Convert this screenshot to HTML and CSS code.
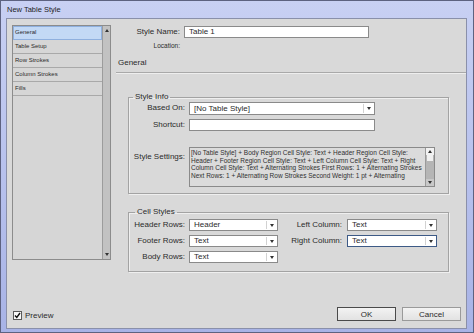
FILE: index.html
```html
<!DOCTYPE html>
<html lang="en">
    <head>
        <title>New Table Style</title>
        <meta charset="UTF-8">
        <meta name="viewport" content="width=device-width, initial-scale=1">
        <link rel="stylesheet" href="styles.css">
    </head>

    <body>
        <div class="window">
            <div class="titlebar">New Table Style</div>

            <div class="dialog">
                <div class="main">
                    <!-- left category list -->
                    <div class="sidebar">
                        <ul class="list">
                            <li class="selected">General</li>
                            <li>Table Setup</li>
                            <li>Row Strokes</li>
                            <li>Column Strokes</li>
                            <li>Fills</li>
                        </ul>
                        <div class="scrollbar">
                            <span class="arrow-up"></span>
                            <span class="arrow-down"></span>
                        </div>
                    </div>

                    <div class="content">
                        <div class="name-row">
                            <label>Style Name:</label>
                            <input class="field" type="text" value="Table 1">
                        </div>
                        <div class="location-row">
                            <span>Location:</span>
                        </div>
                        <div class="section-title">General</div>
                        <div class="rule"></div>

                        <fieldset class="group info-group">
                            <legend>Style Info</legend>
                            <div class="info-grid">
                                <label>Based On:</label>
                                <div class="select wide">
                                    <span class="value">[No Table Style]</span>
                                    <span class="drop"><i></i></span>
                                </div>
                                <label>Shortcut:</label>
                                <input class="field wide" type="text" value="">
                                <label class="top">Style Settings:</label>
                                <div class="settings">
                                    <div class="settings-text">
                                        [No Table Style] + Body Region Cell Style: Text + Header Region Cell Style:<br>
                                        Header + Footer Region Cell Style: Text + Left Column Cell Style: Text + Right<br>
                                        Column Cell Style: Text + Alternating Strokes First Rows: 1 + Alternating Strokes<br>
                                        Next Rows: 1 + Alternating Row Strokes Second Weight: 1 pt + Alternating
                                    </div>
                                    <div class="mini-scroll">
                                        <span class="btn-up"><i></i></span>
                                        <span class="thumb"></span>
                                        <span class="btn-down"><i></i></span>
                                    </div>
                                </div>
                            </div>
                        </fieldset>

                        <fieldset class="group cell-group">
                            <legend>Cell Styles</legend>
                            <div class="cell-grid">
                                <label>Header Rows:</label>
                                <div class="select"><span class="value">Header</span><span class="drop"><i></i></span></div>
                                <label>Left Column:</label>
                                <div class="select"><span class="value">Text</span><span class="drop"><i></i></span></div>

                                <label>Footer Rows:</label>
                                <div class="select"><span class="value">Text</span><span class="drop"><i></i></span></div>
                                <label>Right Column:</label>
                                <div class="select focused"><span class="value">Text</span><span class="drop"><i></i></span></div>

                                <label>Body Rows:</label>
                                <div class="select"><span class="value">Text</span><span class="drop"><i></i></span></div>
                            </div>
                        </fieldset>
                    </div>
                </div>

                <div class="footer">
                    <span class="checkbox">
                        <svg width="7" height="7" viewBox="0 0 7 7"><path d="M1 3.5 L2.8 5.5 L6 1" fill="none" stroke="#111" stroke-width="1.4"/></svg>
                    </span>
                    <span class="check-label">Preview</span>
                    <button class="button default">OK</button>
                    <button class="button">Cancel</button>
                </div>
            </div>
        </div>
    </body>
</html>
```

FILE: styles.css
```css
* {
    box-sizing: border-box;
}
body {
    margin: 0;
    font-family: "Liberation Sans", Arial, sans-serif;
    font-size: 8px;
    color: #2b2b2b;
    background-color: #a9b4e6;
}
.window {
    width: 474px;
    height: 333px;
    display: flex;
    flex-direction: column;
    background: linear-gradient(180deg, #c8d0f3, #b5bfec 60%, #a8b3e6);
    border: 1px solid #5d6280;
}
.titlebar {
    height: 17px;
    padding-left: 6px;
    font-size: 7.5px;
    line-height: 17px;
    color: #1e1e1e;
}
.dialog {
    flex: 1;
    margin: 0 6px 3px 5px;
    padding: 6px 5px 7px 5px;
    background-color: #d9d9d9;
    border: 1px solid #8a90aa;
    display: flex;
    flex-direction: column;
}
.main {
    flex: 1;
    display: flex;
    gap: 5px;
}

/* sidebar list */
.sidebar {
    width: 99px;
    height: 235px;
    display: flex;
    background-color: #d6d6d6;
    border: 1px solid #8c8c8c;
}
.list {
    flex: 1;
    list-style: none;
    margin: 0;
    padding: 0;
}
.list li {
    height: 14px;
    padding-left: 2px;
    font-size: 6px;
    line-height: 13px;
    border-bottom: 1px solid #a9a9a9;
}
.list li.selected {
    background-color: #c3d9f5;
    border: 1px solid #8fb0de;
    line-height: 11px;
    padding-left: 1px;
}
.scrollbar {
    width: 8px;
    background-color: #c2c2c2;
    border-left: 1px solid #9c9c9c;
    display: flex;
    flex-direction: column;
    justify-content: space-between;
    align-items: center;
    padding: 3px 0;
}
.arrow-up,
.btn-up i {
    width: 0;
    height: 0;
    border-left: 2px solid transparent;
    border-right: 2px solid transparent;
    border-bottom: 3px solid #333;
}
.arrow-down,
.btn-down i,
.drop i {
    width: 0;
    height: 0;
    border-left: 2px solid transparent;
    border-right: 2px solid transparent;
    border-top: 3px solid #333;
}

/* right side */
.content {
    flex: 1;
    margin-right: -5px;
}
label {
    text-align: right;
    white-space: nowrap;
}
.name-row {
    display: grid;
    grid-template-columns: 64px 185px;
    column-gap: 4px;
    margin-top: 1px;
    line-height: 12px;
}
.field {
    height: 12px;
    padding: 0 4px;
    font: inherit;
    font-size: 8px;
    color: #2b2b2b;
    background-color: #fff;
    border: 1px solid #8a8a8a;
    outline: none;
}
.location-row {
    width: 64px;
    margin-top: 4px;
    text-align: right;
    font-size: 6.5px;
    line-height: 8px;
}
.section-title {
    margin-top: 8px;
    padding-left: 2px;
    line-height: 10px;
}
.rule {
    margin-top: 4px;
    border-top: 1px solid #a9a9a9;
    border-bottom: 1px solid #eeeeee;
}
.group {
    width: 321px;
    margin: 0 0 0 12px;
    padding: 0;
    border: 1px solid #a3a3a3;
    box-shadow: inset 1px 1px 0 #efefef, 1px 1px 0 #efefef;
}
.group legend {
    padding: 0 2px;
    line-height: 10px;
    font-size: 8px;
}
.info-group {
    margin-top: 18px;
    padding-bottom: 6px;
}
.info-group legend {
    margin-left: 4px;
}
.cell-group {
    margin-top: 13px;
    padding-top: 2px;
    padding-bottom: 8px;
}
.cell-group legend {
    margin-left: 6px;
}
.info-grid {
    display: grid;
    grid-template-columns: 56px auto;
    column-gap: 4px;
    row-gap: 4px;
    justify-items: start;
    line-height: 12px;
}
.info-grid label {
    justify-self: end;
}
.info-grid label.top {
    margin-top: 12px;
    padding-top: 4px;
    align-self: start;
}
.select {
    height: 12px;
    display: flex;
    background-color: #fff;
    border: 1px solid #8a8a8a;
    line-height: 10px;
}
.select.wide,
.field.wide {
    width: 186px;
}
.info-grid .select.wide {
    height: 13px;
    line-height: 11px;
}
.select .value {
    flex: 1;
    padding-left: 4px;
}
.select .drop {
    width: 11px;
    display: flex;
    align-items: center;
    justify-content: center;
    border-left: 1px solid #d2d2d2;
    margin: 1px 0;
}
.select.focused {
    border-color: #3d5a86;
}
.settings {
    width: 246px;
    height: 40px;
    margin-top: 12px;
    display: flex;
    background-color: #dbdbdb;
    border: 1px solid #8a8a8a;
}
.settings-text {
    flex: 1;
    overflow: hidden;
    white-space: nowrap;
    padding: 1px 0 0 1px;
    font-size: 6.5px;
    line-height: 7.5px;
    color: #303030;
}
.mini-scroll {
    width: 9px;
    display: flex;
    flex-direction: column;
    background-color: #b5b5b5;
    border-left: 1px solid #9a9a9a;
}
.btn-up,
.btn-down {
    height: 7px;
    display: flex;
    align-items: center;
    justify-content: center;
    background-color: #f2f2f2;
}
.btn-down {
    margin-top: auto;
    background-color: #c8c8c8;
}
.thumb {
    height: 6px;
    margin: 0 1px;
    background-color: #f0f0f0;
}
.cell-grid {
    display: grid;
    grid-template-columns: 56px 89px 61px 90px;
    column-gap: 4px;
    row-gap: 4px;
    line-height: 12px;
}
.cell-grid label:nth-of-type(2),
.cell-grid label:nth-of-type(4) {
    margin-right: 1px;
}

/* bottom bar */
.footer {
    height: 14px;
    display: flex;
    align-items: center;
}
.checkbox {
    width: 9px;
    height: 9px;
    margin: 3px 0 0 1px;
    display: flex;
    align-items: center;
    justify-content: center;
    background-color: #fafafa;
    border: 1px solid #5a5a5a;
}
.check-label {
    margin: 3px 0 0 3px;
}
.button {
    width: 59px;
    height: 14px;
    padding: 0;
    font: inherit;
    font-size: 8px;
    color: #2b2b2b;
    background: linear-gradient(180deg, #f3f3f3, #e2e2e2);
    border: 1px solid #9a9a9a;
}
.button.default {
    margin-left: auto;
    margin-right: 6px;
    border-color: #4a4a4a;
}
```
